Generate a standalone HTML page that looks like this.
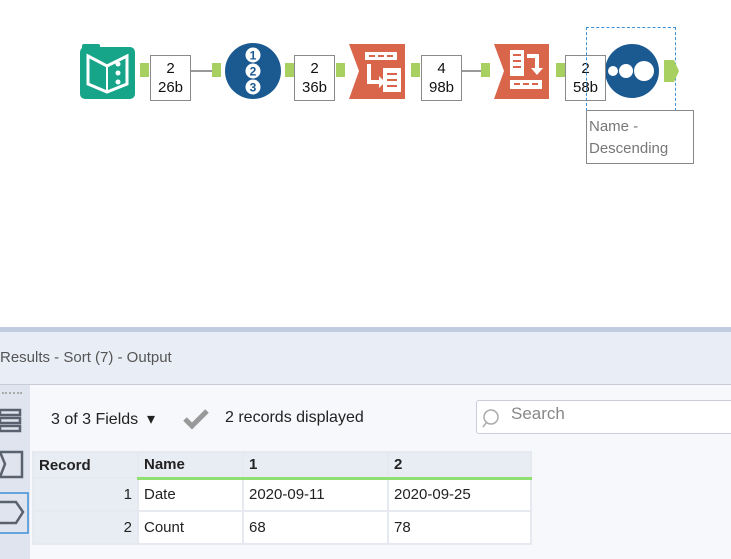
<html><head><style>
body{margin:0;width:731px;height:559px;overflow:hidden;background:#fff;font-family:"Liberation Sans",sans-serif;position:relative}
.a{position:absolute}
.box{position:absolute;background:#fff;border:1px solid #8a8a8a;width:41px;height:46px;text-align:center;font-size:15px;line-height:19px;color:#111;box-sizing:border-box;padding-top:3px}
.tab{position:absolute;width:9px;height:14px;background:#a8d060}
.ln{position:absolute;height:2px;background:#999}
table{table-layout:fixed;border-collapse:collapse}
td{border:2px solid #e6e9ef;padding:0 5px;height:29px;font-size:15px;color:#222;background:#fff;box-sizing:border-box}
th{border:2px solid #e6e9ef;padding:0 5px;height:26px;font-size:15px;text-align:left;background:#e8ecf3;color:#222;box-sizing:border-box}
</style></head><body>
<svg class="a" style="left:80px;top:44px" width="55" height="55" viewBox="0 0 55 55"><rect x="0" y="3" width="55" height="52" rx="5" fill="#17a58a"/><rect x="2" y="0" width="18" height="8" rx="2" fill="#17a58a"/><path d="M8 12 L27 22 L47 12 V40 L27 48 L8 40Z" fill="none" stroke="#fff" stroke-width="3"/><path d="M27 22V48" stroke="#fff" stroke-width="2"/><circle cx="38" cy="20" r="2.5" fill="#fff"/><circle cx="38" cy="29" r="2.5" fill="#fff"/><circle cx="38" cy="38" r="2.5" fill="#fff"/></svg>
<div class="tab" style="left:140px;top:63px"></div>
<div class="box" style="left:150px;top:55px">2<br>26b</div>
<div class="ln" style="left:191px;top:70px;width:22px"></div>
<div class="tab" style="left:212px;top:63px"></div>
<svg class="a" style="left:224px;top:42px" width="58" height="58"><circle cx="29" cy="29" r="28" fill="#1b5a91"/><g fill="#fff" font-size="12" font-weight="bold" text-anchor="middle"><circle cx="29" cy="13" r="7.5"/><circle cx="29" cy="29" r="7.5"/><circle cx="29" cy="45" r="7.5"/><text x="29" y="17.5" fill="#1b5a91">1</text><text x="29" y="33.5" fill="#1b5a91">2</text><text x="29" y="49.5" fill="#1b5a91">3</text></g></svg>
<div class="tab" style="left:285px;top:63px"></div>
<div class="box" style="left:294px;top:55px">2<br>36b</div>
<div class="tab" style="left:336px;top:63px"></div>
<svg class="a" style="left:349px;top:44px" width="57" height="55"><path d="M0 0H56V55H0L10 27Z" fill="#d9654b"/><g fill="#fff"><rect x="16" y="8" width="32" height="8"/><rect x="34" y="24" width="18" height="24"/><path d="M22 20v16h8v-4l6 6-6 6v-4h-12v-20z"/></g><g fill="#d9654b"><rect x="20" y="11" width="6" height="2"/><rect x="29" y="11" width="6" height="2"/><rect x="38" y="11" width="6" height="2"/><rect x="38" y="29" width="10" height="2"/><rect x="38" y="35" width="10" height="2"/><rect x="38" y="41" width="10" height="2"/></g></svg>
<div class="tab" style="left:411px;top:63px"></div>
<div class="box" style="left:421px;top:55px">4<br>98b</div>
<div class="ln" style="left:462px;top:70px;width:20px"></div>
<div class="tab" style="left:481px;top:63px"></div>
<svg class="a" style="left:494px;top:44px" width="56" height="55"><path d="M0 0H55V55H0L10 27Z" fill="#d9654b"/><g fill="#fff"><rect x="16" y="6" width="14" height="26"/><rect x="16" y="36" width="32" height="9"/><path d="M33 10h12v14h4l-6 7-6-7h4v-10h-8z"/></g><g fill="#d9654b"><rect x="19" y="10" width="8" height="2"/><rect x="19" y="16" width="8" height="2"/><rect x="19" y="22" width="8" height="2"/><rect x="20" y="39" width="6" height="2"/><rect x="29" y="39" width="6" height="2"/><rect x="38" y="39" width="6" height="2"/></g></svg>
<div class="tab" style="left:556px;top:63px"></div>
<svg class="a" style="left:604px;top:43px" width="56" height="56"><circle cx="28" cy="28" r="27" fill="#1b5a91"/><circle cx="9" cy="28" r="5" fill="#fff"/><circle cx="22" cy="28" r="7" fill="#fff"/><circle cx="40" cy="28" r="10" fill="#fff"/></svg>
<div class="box" style="left:565px;top:55px">2<br>58b</div>
<div class="a" style="left:586px;top:27px;width:88px;height:82px;border:1px dashed #3d8fd6"></div>
<svg class="a" style="left:664px;top:60px" width="16" height="22"><path d="M0 0H10L15 11L10 22H0Z" fill="#a8d060"/></svg>
<div class="a" style="left:586px;top:110px;width:108px;height:54px;border:1px solid #888;background:#fff;box-sizing:border-box;padding:5px 0 0 2px;font-size:15px;line-height:22px;color:#777">Name -<br>Descending</div>
<div class="a" style="left:0;top:327px;width:731px;height:5px;background:#c2cce0"></div>
<div class="a" style="left:0;top:332px;width:731px;height:52px;background:#e9edf5;border-bottom:1px solid #c8ccd4"></div>
<div class="a" style="left:0;top:349px;font-size:15px;color:#555">Results - Sort (7) - Output</div>
<div class="a" style="left:0;top:385px;width:30px;height:174px;background:#dfe4ee"></div>
<div class="a" style="left:30px;top:385px;width:701px;height:174px;background:#f6f8fb"></div>
<div class="a" style="left:2px;top:392px;width:20px;border-top:2px dotted #aaa"></div>
<svg class="a" style="left:0;top:405px" width="30" height="130"><g stroke="#5a6270" stroke-width="2.5" fill="none"><rect x="0" y="5" width="20" height="5"/><rect x="0" y="13" width="20" height="5"/><rect x="0" y="21" width="20" height="5"/><path d="M0 47h22v25H0M0 47l5 12-5 13"/><rect x="-1" y="88" width="29" height="40" stroke="#3d8fd6" stroke-width="1.5"/><path d="M0 97h16l7 10-7 11H0"/></g></svg>
<div class="a" style="left:51px;top:409px;font-size:16px;color:#222">3 of 3 Fields &nbsp;▾</div>
<svg class="a" style="left:183px;top:409px" width="26" height="20"><path d="M2 10l7 7L24 2" stroke="#999" stroke-width="5" fill="none"/></svg>
<div class="a" style="left:225px;top:409px;font-size:16px;color:#222">2 records displayed</div>
<div class="a" style="left:476px;top:400px;width:260px;height:34px;border:1px solid #ccd;border-radius:3px;background:#fff;box-sizing:border-box"></div>
<svg class="a" style="left:482px;top:408px" width="20" height="22"><circle cx="9" cy="9" r="7" stroke="#aaa" stroke-width="1.5" fill="none"/><path d="M4 15l-3 4" stroke="#aaa" stroke-width="1.5"/></svg>
<div class="a" style="left:511px;top:404px;font-size:17px;color:#888">Search</div>
<table class="a" style="left:32px;top:451px;width:498px">
<colgroup><col style="width:105px"><col style="width:105px"><col style="width:145px"><col style="width:143px"></colgroup>
<tr><th>Record</th><th style="border-bottom:3px solid #8fe070">Name</th><th style="border-bottom:3px solid #8fe070">1</th><th style="border-bottom:3px solid #8fe070">2</th></tr>
<tr><td style="background:#e8ecf3;text-align:right;height:33px">1</td><td>Date</td><td>2020-09-11</td><td>2020-09-25</td></tr>
<tr><td style="background:#e8ecf3;text-align:right;height:33px">2</td><td>Count</td><td>68</td><td>78</td></tr>
</table>
</body></html>
